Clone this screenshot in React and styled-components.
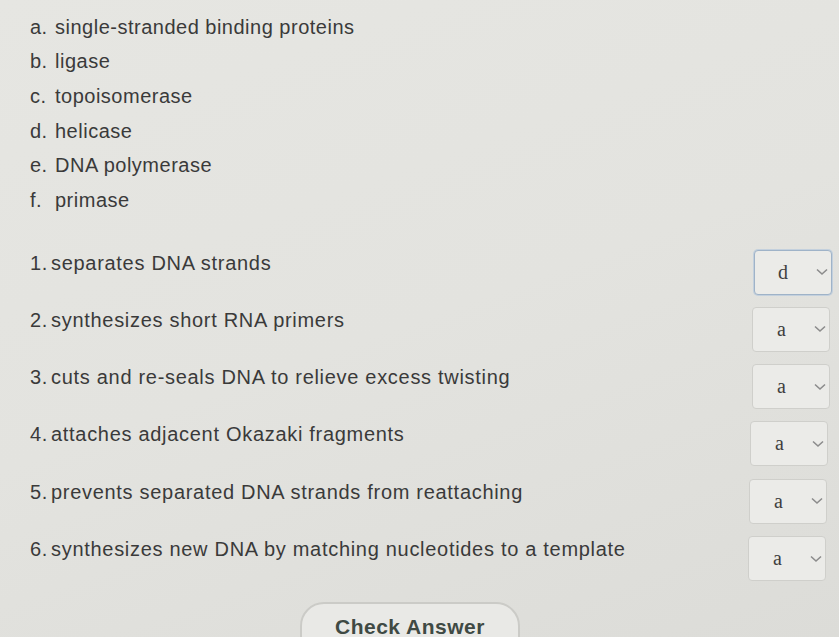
import React from "react";
import styled, { createGlobalStyle } from "styled-components";

const Global = createGlobalStyle`
  html, body { margin: 0; padding: 0; }
  body {
    background: linear-gradient(160deg, #e6e6e2 0%, #e3e3df 50%, #dcdcd8 100%);
    font-family: "Liberation Sans", Arial, sans-serif;
    color: #3a3a3a;
    width: 839px;
    height: 637px;
    overflow: hidden;
  }
`;

const Page = styled.div`
  display: flex;
  flex-direction: column;
  padding: 10px 7px 0 30px;
`;

const Options = styled.ol`
  list-style: none;
  margin: 0;
  padding: 0;
  display: flex;
  flex-direction: column;
`;

const Option = styled.li`
  display: flex;
  gap: 5px;
  height: 34.6px;
  align-items: center;
  font-size: 20px;
  letter-spacing: 0.5px;
`;

const Marker = styled.span`
  width: 20px;
  flex: none;
`;

const Statements = styled.div`
  margin-top: 35px;
  display: flex;
  flex-direction: column;
`;

const Row = styled.div`
  display: flex;
  justify-content: space-between;
  align-items: flex-start;
  height: 57.3px;
`;

const Statement = styled.div`
  display: flex;
  gap: 2px;
  font-size: 20px;
  line-height: 20px;
  letter-spacing: 0.7px;
`;

const Num = styled.span`
  width: 19px;
  flex: none;
`;

const Select = styled.div`
  width: 78px;
  height: 45px;
  box-sizing: border-box;
  margin-top: -3px;
  margin-right: ${(p) => p.$shift}px;
  border: 1.5px solid ${(p) => (p.$focused ? "#9fb3c8" : "#cfcfcb")};
  border-radius: 4px;
  background: #ebebe8;
  display: flex;
  align-items: center;
  justify-content: flex-end;
  padding-right: 3px;
  gap: 28px;
  box-shadow: ${(p) => (p.$focused ? "0 0 0 1px #c3d0dd" : "none")};
`;

const Value = styled.span`
  font-family: "Liberation Serif", serif;
  font-size: 20px;
  color: #3f3f3f;
`;

const Chevron = () => (
  <svg width="12" height="8" viewBox="0 0 12 8">
    <path d="M1 1.5 L6 6 L11 1.5" fill="none" stroke="#8c8c8c" strokeWidth="1.6" />
  </svg>
);

const ButtonWrap = styled.div`
  margin-top: 6px;
  padding-left: 270px;
`;

const Button = styled.button`
  width: 220px;
  height: 60px;
  border: 2px solid #cbcbc7;
  border-radius: 24px;
  background: #e9e9e6;
  font-family: "Liberation Sans", Arial, sans-serif;
  font-weight: bold;
  font-size: 21px;
  letter-spacing: 0.5px;
  color: #3f4a44;
  padding: 11px 0 0;
  display: flex;
  justify-content: center;
  align-items: flex-start;
`;

const options = [
  ["a.", "single-stranded binding proteins"],
  ["b.", "ligase"],
  ["c.", "topoisomerase"],
  ["d.", "helicase"],
  ["e.", "DNA polymerase"],
  ["f.", "primase"],
];

const statements = [
  ["1.", "separates DNA strands", "d", true, 0],
  ["2.", "synthesizes short RNA primers", "a", false, 2],
  ["3.", "cuts and re-seals DNA to relieve excess twisting", "a", false, 2],
  ["4.", "attaches adjacent Okazaki fragments", "a", false, 4],
  ["5.", "prevents separated DNA strands from reattaching", "a", false, 5],
  ["6.", "synthesizes new DNA by matching nucleotides to a template", "a", false, 6],
];

export default function App() {
  return (
    <>
      <Global />
      <Page>
        <Options>
          {options.map(([m, t]) => (
            <Option key={m}>
              <Marker>{m}</Marker>
              <span>{t}</span>
            </Option>
          ))}
        </Options>
        <Statements>
          {statements.map(([n, t, v, f, s]) => (
            <Row key={n}>
              <Statement>
                <Num>{n}</Num>
                <span>{t}</span>
              </Statement>
              <Select $focused={f} $shift={s}>
                <Value>{v}</Value>
                <Chevron />
              </Select>
            </Row>
          ))}
        </Statements>
        <ButtonWrap>
          <Button>Check Answer</Button>
        </ButtonWrap>
      </Page>
    </>
  );
}
